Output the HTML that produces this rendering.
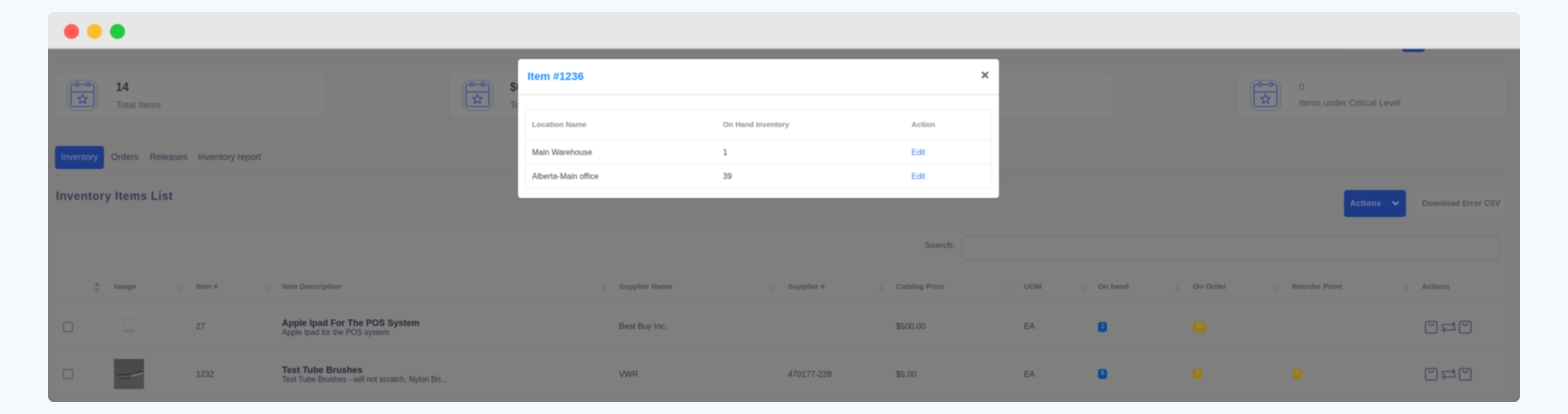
<!DOCTYPE html>
<html><head><meta charset="utf-8"><title>Inventory</title>
<style>
html,body{margin:0;padding:0;background:#f5f9fe;width:1568px;height:414px;overflow:hidden;font-family:"Liberation Sans",sans-serif}
.a{position:absolute}
.t{position:absolute;white-space:nowrap;transform:translateY(-50%);font-size:8.2px;line-height:12px;color:#2f3140}
.h{font-weight:bold;color:#4c4d52;font-size:7.6px}
#win{position:absolute;left:48px;top:12px;width:1472px;height:390px;border-radius:6px;overflow:hidden}
#root{position:absolute;left:-48px;top:-12px;width:1568px;height:414px;filter:blur(.4px);background:#7d7d7d}
.card{position:absolute;background:#818181;border-radius:6px;top:73px;height:44px}
.line{position:absolute;height:1px;background:#777}
.rl{position:absolute;height:1px;left:55px;width:1451px;background:#7a7a7a}
.sort{position:absolute;width:0;height:0;border-left:2.5px solid transparent;border-right:2.5px solid transparent}
.badge{position:absolute;border-radius:2.5px;height:10px;top:0;text-align:center;font-size:6.5px;line-height:10px;color:#9a9a9a}
.cb{position:absolute;left:63px;width:10px;height:10px;box-sizing:border-box;border:1px solid #55565c;border-radius:1.5px}
.mt{font-size:8px;color:#3d3f4d}
.mh{font-size:7.6px;font-weight:bold;color:#8c8c8f}
</style></head><body>
<div id="win"><div id="root">
<div class="a" style="left:0;top:0;width:1568px;height:49px;background:#e7e7e7;border-bottom:1px solid #c9c9c9;box-sizing:border-box"></div>
<div class="a" style="left:64px;top:24px;width:15px;height:15px;border-radius:50%;background:#ff5f57"></div>
<div class="a" style="left:87px;top:24px;width:15px;height:15px;border-radius:50%;background:#febc2e"></div>
<div class="a" style="left:110px;top:24px;width:15px;height:15px;border-radius:50%;background:#28c840"></div>

<div class="a" style="left:1341px;top:49px;width:51px;height:3px;background:#818181;border:1px solid #777;border-top:0;border-radius:0 0 3px 3px;box-sizing:border-box"></div>
<div class="a" style="left:1402px;top:49px;width:23px;height:3px;background:#1d3a85;border-radius:0 0 3px 3px"></div>
<div class="line" style="left:55px;top:58px;width:1451px"></div>

<!-- cards -->
<div class="card" style="left:55px;width:269px"></div>
<div class="card" style="left:450px;width:269px"></div>
<div class="card" style="left:844px;width:268px"></div>
<div class="card" style="left:1238px;width:268px"></div>

<svg class="a" style="left:67px;top:80px" width="31" height="31" viewBox="0 0 31 31" fill="none"><rect x=".5" y=".5" width="30" height="30" rx="7" stroke="#6a6c78"/><g stroke="#3a4a95" stroke-width="1.1"><rect x="4" y="4.5" width="23" height="22" rx="2"/><path d="M4 12H27"/><circle cx="10" cy="4.5" r="1.8" fill="#7d7d7d"/><circle cx="21" cy="4.5" r="1.8" fill="#7d7d7d"/><path d="M15.5 14.5l1.4 2.9 3.2.4-2.3 2.2.6 3.2-2.9-1.6-2.9 1.6.6-3.2-2.3-2.2 3.2-.4z"/></g></svg>
<svg class="a" style="left:462px;top:80px" width="31" height="31" viewBox="0 0 31 31" fill="none"><rect x=".5" y=".5" width="30" height="30" rx="7" stroke="#6a6c78"/><g stroke="#3a4a95" stroke-width="1.1"><rect x="4" y="4.5" width="23" height="22" rx="2"/><path d="M4 12H27"/><circle cx="10" cy="4.5" r="1.8" fill="#7d7d7d"/><circle cx="21" cy="4.5" r="1.8" fill="#7d7d7d"/><path d="M15.5 14.5l1.4 2.9 3.2.4-2.3 2.2.6 3.2-2.9-1.6-2.9 1.6.6-3.2-2.3-2.2 3.2-.4z"/></g></svg>
<svg class="a" style="left:1250px;top:80px" width="31" height="31" viewBox="0 0 31 31" fill="none"><rect x=".5" y=".5" width="30" height="30" rx="7" stroke="#6a6c78"/><g stroke="#3a4a95" stroke-width="1.1"><rect x="4" y="4.5" width="23" height="22" rx="2"/><path d="M4 12H27"/><circle cx="10" cy="4.5" r="1.8" fill="#7d7d7d"/><circle cx="21" cy="4.5" r="1.8" fill="#7d7d7d"/><path d="M15.5 14.5l1.4 2.9 3.2.4-2.3 2.2.6 3.2-2.9-1.6-2.9 1.6.6-3.2-2.3-2.2 3.2-.4z"/></g></svg>

<span class="t" style="left:116px;top:87.5px;font-size:11.5px;font-weight:bold;color:#2a2c3a">14</span>
<span class="t" style="left:116px;top:104.5px;font-size:9.3px;color:#4a4c56">Total Items</span>
<span class="t" style="left:510px;top:87.5px;font-size:11.5px;font-weight:bold;color:#2a2c3a">$0</span>
<span class="t" style="left:510px;top:104.5px;font-size:9.3px;color:#4a4c56">Total</span>
<span class="t" style="left:1299px;top:87.5px;font-size:9.5px;color:#4a4c56">0</span>
<span class="t" style="left:1299px;top:102.5px;font-size:9px;color:#4a4c56">Items under Critical Level</span>

<!-- tabs -->
<div class="a" style="left:55px;top:146px;width:49px;height:23px;background:#1d3a85;border-radius:3px"></div>
<span class="t" style="left:61px;top:157px;font-size:9px;color:#7c8bb4">Inventory</span>
<span class="t" style="left:111px;top:157px;font-size:9px;color:#33354a">Orders</span>
<span class="t" style="left:150px;top:157px;font-size:9px;color:#33354a">Releases</span>
<span class="t" style="left:198px;top:157px;font-size:9px;color:#33354a">Inventory report</span>
<div class="line" style="left:55px;top:175px;width:1451px"></div>

<span class="t" style="left:56px;top:196.5px;font-size:11.5px;font-weight:bold;letter-spacing:.42px;color:#333a4f">Inventory Items List</span>

<div class="a" style="left:1344px;top:190px;width:62px;height:27px;background:#1d3a85;border-radius:3px"></div>
<span class="t" style="left:1350px;top:203.5px;font-size:8px;font-weight:bold;letter-spacing:.3px;color:#7683a8">Actions</span>
<svg class="a" style="left:1391px;top:200px" width="9" height="7" viewBox="0 0 9 7" fill="none"><path d="M1.5 1.5L4.5 4.5L7.5 1.5" stroke="#8a96b8" stroke-width="1.5"/></svg>
<div class="a" style="left:1415px;top:190px;width:91px;height:27px;background:#818181;border:1px solid #7b7b7b;border-radius:3px;box-sizing:border-box"></div>
<span class="t" style="left:1422px;top:203.5px;font-size:7.8px;font-weight:bold;letter-spacing:.1px;color:#4c4d52">Download Error CSV</span>

<!-- table area -->
<div class="a" style="left:55px;top:229px;width:1451px;height:173px;background:#7f7f7f"></div>
<span class="t" style="left:925px;top:246px;font-size:8.2px;font-weight:bold;color:#4c4d52">Search:</span>
<div class="a" style="left:961px;top:235px;width:539px;height:26px;border:1px solid #747474;border-radius:6px;box-sizing:border-box"></div>

<span class="t h" style="left:114px;top:286.5px">Image</span>
<span class="t h" style="left:196px;top:286.5px">Item #</span>
<span class="t h" style="left:282px;top:286.5px">Item Description</span>
<span class="t h" style="left:619px;top:286.5px">Supplier Name</span>
<span class="t h" style="left:788px;top:286.5px">Supplier #</span>
<span class="t h" style="left:896px;top:286.5px">Catalog Price</span>
<span class="t h" style="left:1024px;top:286.5px">UOM</span>
<span class="t h" style="left:1098px;top:286.5px">On hand</span>
<span class="t h" style="left:1193px;top:286.5px">On Order</span>
<span class="t h" style="left:1292px;top:286.5px">Reorder Point</span>
<span class="t h" style="left:1422px;top:286.5px">Actions</span>

<!-- sort arrows -->
<div class="sort" style="left:94px;top:282px;border-left-width:3.5px;border-right-width:3.5px;border-bottom:4px solid #5f6068"></div>
<div class="sort" style="left:94px;top:288px;border-left-width:3.5px;border-right-width:3.5px;border-top:4px solid #6a6b70"></div>
<div class="sort" style="left:179px;top:285px;border-bottom:3px solid #747474"></div><div class="sort" style="left:179px;top:289px;border-top:3px solid #747474"></div>
<div class="sort" style="left:265px;top:285px;border-bottom:3px solid #747474"></div><div class="sort" style="left:265px;top:289px;border-top:3px solid #747474"></div>
<div class="sort" style="left:602px;top:285px;border-bottom:3px solid #747474"></div><div class="sort" style="left:602px;top:289px;border-top:3px solid #747474"></div>
<div class="sort" style="left:771px;top:285px;border-bottom:3px solid #747474"></div><div class="sort" style="left:771px;top:289px;border-top:3px solid #747474"></div>
<div class="sort" style="left:879px;top:285px;border-bottom:3px solid #747474"></div><div class="sort" style="left:879px;top:289px;border-top:3px solid #747474"></div>
<div class="sort" style="left:1006px;top:285px;border-bottom:3px solid #747474"></div><div class="sort" style="left:1006px;top:289px;border-top:3px solid #747474"></div>
<div class="sort" style="left:1081px;top:285px;border-bottom:3px solid #747474"></div><div class="sort" style="left:1081px;top:289px;border-top:3px solid #747474"></div>
<div class="sort" style="left:1175px;top:285px;border-bottom:3px solid #747474"></div><div class="sort" style="left:1175px;top:289px;border-top:3px solid #747474"></div>
<div class="sort" style="left:1275px;top:285px;border-bottom:3px solid #747474"></div><div class="sort" style="left:1275px;top:289px;border-top:3px solid #747474"></div>
<div class="sort" style="left:1404px;top:285px;border-bottom:3px solid #747474"></div><div class="sort" style="left:1404px;top:289px;border-top:3px solid #747474"></div>

<div class="rl" style="top:303px"></div>
<div class="rl" style="top:351px"></div>
<div class="rl" style="top:398px"></div>

<!-- row 1 -->
<div class="cb" style="top:321.5px"></div>
<div class="a" style="left:114px;top:311px;width:30px;height:30px;background:#818181"></div>
<svg class="a" style="left:122px;top:318px" width="14" height="16" viewBox="0 0 14 16" fill="none"><rect x="1.5" y="1" width="11" height="8" stroke="#797979"/><path d="M1 12H13M1 14H13" stroke="#747474" stroke-width="1.4"/></svg>
<span class="t" style="left:196px;top:326.5px">27</span>
<span class="t" style="left:282px;top:322.5px;font-size:9px;font-weight:bold;color:#23242f">Apple Ipad For The POS System</span>
<span class="t" style="left:282px;top:332.5px;font-size:7.8px">Apple Ipad for the POS system</span>
<span class="t" style="left:619px;top:326.5px">Best Buy Inc.</span>
<span class="t" style="left:896px;top:326.5px">$500.00</span>
<span class="t" style="left:1024px;top:326.5px">EA</span>
<div class="badge" style="left:1098px;top:322px;width:9px;background:#0a4a92">2</div>
<div class="badge" style="left:1193px;top:322px;width:13px;background:#9a7a10">30</div>

<!-- row 2 -->
<div class="cb" style="top:369px"></div>
<div class="a" style="left:114px;top:359px;width:30px;height:30px;background:linear-gradient(180deg,#46484a 0%,#4a4b4e 45%,#525150 65%,#4c4c4c 100%)"></div>
<svg class="a" style="left:114px;top:359px" width="30" height="30" viewBox="0 0 30 30" fill="none"><path d="M3 16L20 15L29 12" stroke="#2c2c2c" stroke-width="1"/><path d="M17 17L29 14" stroke="#76705f" stroke-width="2"/><path d="M4 20L18 19" stroke="#333" stroke-width="1"/></svg>
<span class="t" style="left:196px;top:374.5px">1232</span>
<span class="t" style="left:282px;top:370px;font-size:9.1px;font-weight:bold;color:#23242f">Test Tube Brushes</span>
<span class="t" style="left:282px;top:380px;font-size:7.8px">Test Tube Brushes - will not scratch, Nylon Bri...</span>
<span class="t" style="left:619px;top:374.5px">VWR</span>
<span class="t" style="left:788px;top:374.5px">470177-228</span>
<span class="t" style="left:896px;top:374.5px">$5.00</span>
<span class="t" style="left:1024px;top:374.5px">EA</span>
<div class="badge" style="left:1098px;top:369px;width:9px;background:#0a4a92">9</div>
<div class="badge" style="left:1193px;top:369px;width:9px;background:#9a7a10">0</div>
<div class="badge" style="left:1293px;top:369px;width:9px;background:#9a7a10">0</div>

<!-- action icons -->
<svg class="a" style="left:1424px;top:320px" width="50" height="14" viewBox="0 0 50 14" fill="none" stroke="#4a4d5c" stroke-width="1.3"><rect x="1.5" y="1.5" width="11.5" height="11.5" rx="1.5"/><path d="M4.5 3.5Q7.2 7.5 10 3.5"/><rect x="35.5" y="1.5" width="11.5" height="11.5" rx="1.5"/><path d="M38.5 3.5Q41.2 7.5 44 3.5"/><path d="M18.5 7.5V4.5H30.5M28.5 2L31 4.5L28.5 7M31 7V10H19M21 7.5L18.5 10L21 12.5"/></svg>
<svg class="a" style="left:1424px;top:367px" width="50" height="14" viewBox="0 0 50 14" fill="none" stroke="#4a4d5c" stroke-width="1.3"><rect x="1.5" y="1.5" width="11.5" height="11.5" rx="1.5"/><path d="M4.5 3.5Q7.2 7.5 10 3.5"/><rect x="35.5" y="1.5" width="11.5" height="11.5" rx="1.5"/><path d="M38.5 3.5Q41.2 7.5 44 3.5"/><path d="M18.5 7.5V4.5H30.5M28.5 2L31 4.5L28.5 7M31 7V10H19M21 7.5L18.5 10L21 12.5"/></svg>

<!-- modal -->
<div class="a" style="left:518px;top:59px;width:481px;height:139px;background:#fff;border-radius:3px;box-shadow:0 0 2px rgba(0,0,0,.2)"></div>
<span class="t" style="left:527.5px;top:76.5px;font-size:11px;font-weight:bold;color:#1a8cff">Item #1236</span>
<svg class="a" style="left:981px;top:71px" width="8" height="8" viewBox="0 0 8 8"><path d="M1 1L7 7M7 1L1 7" stroke="#6a6b70" stroke-width="1.8"/></svg>
<div class="a" style="left:518px;top:94px;width:481px;height:1px;background:#e9e9e9"></div>
<div class="a" style="left:525px;top:109px;width:467px;height:80px;border:1px solid #f3f3f3;box-sizing:border-box"></div>
<div class="a" style="left:525px;top:140px;width:467px;height:1px;background:#f1f1f1"></div>
<div class="a" style="left:525px;top:164px;width:467px;height:1px;background:#f1f1f1"></div>
<span class="t mh" style="left:532px;top:125px">Location Name</span>
<span class="t mh" style="left:723px;top:125px;font-size:7.4px">On Hand Inventory</span>
<span class="t mh" style="left:911.5px;top:125px">Action</span>
<span class="t mt" style="left:532px;top:152.5px">Main Warehouse</span>
<span class="t mt" style="left:723px;top:152.5px">1</span>
<span class="t mt" style="left:911.5px;top:152.5px;color:#3f74ee">Edit</span>
<span class="t mt" style="left:532px;top:176.5px">Alberta-Main office</span>
<span class="t mt" style="left:723px;top:176.5px">39</span>
<span class="t mt" style="left:911.5px;top:176.5px;color:#3f74ee">Edit</span>
</div></div>
</body></html>
